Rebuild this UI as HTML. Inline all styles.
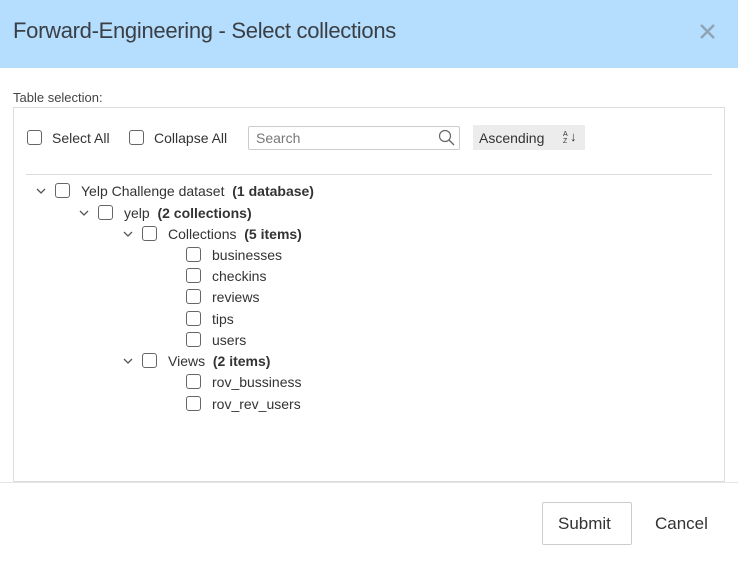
<!DOCTYPE html>
<html><head><style>
*{box-sizing:border-box;margin:0;padding:0}
body{width:738px;height:561px;background:#fff;font-family:"Liberation Sans",sans-serif;color:#333;position:relative;overflow:hidden}
.hdr{position:absolute;left:0;top:0;width:738px;height:68px;background:#b5ddfd}
.title{position:absolute;left:13px;top:18px;font-size:22px;color:#3a3f45;letter-spacing:-0.3px}
.x{position:absolute;left:698px;top:22px}
.a{position:absolute;white-space:nowrap;font-size:14px;color:#333}
.cb{position:absolute;width:15px;height:15px;border:1px solid #666;border-radius:3px;background:#fff}
.box{position:absolute;left:13px;top:107px;width:712px;height:375px;border:1px solid #ddd}
b{font-weight:bold}
</style></head><body>
<div class="hdr"></div>
<div class="title">Forward-Engineering - Select collections</div>
<svg class="x" width="20" height="20" viewBox="0 0 20 20"><path d="M3 3L16 16M16 3L3 16" stroke="#8fa3b5" stroke-width="2.5"/></svg>
<div class="a" style="left:13px;top:90px;font-size:13px;color:#444">Table selection:</div>
<div class="box"></div>
<div class="cb" style="left:27px;top:130px"></div><div class="a" style="left:52px;top:130px">Select All</div>
<div class="cb" style="left:129px;top:130px"></div><div class="a" style="left:154px;top:130px">Collapse All</div>
<div style="position:absolute;left:248px;top:126px;width:212px;height:24px;border:1px solid #ccc;border-radius:2px"></div>
<div class="a" style="left:256px;top:130px;color:#777">Search</div>
<svg style="position:absolute;left:438px;top:129px" width="18" height="18" viewBox="0 0 18 18"><circle cx="7" cy="7" r="5.5" fill="none" stroke="#666" stroke-width="1.2"/><path d="M11 11L16 16" stroke="#666" stroke-width="1.3"/></svg>
<div style="position:absolute;left:473px;top:125px;width:112px;height:25px;background:#ececec"></div>
<div class="a" style="left:479px;top:130px">Ascending</div>
<div class="a" style="left:563px;top:131px;font-size:7px;line-height:7px">A<br>Z</div><div class="a" style="left:570px;top:129px;font-size:13px">↓</div>
<div style="position:absolute;left:26px;top:174px;width:686px;height:1px;background:#ddd"></div>
<svg width="738" height="561" style="position:absolute;left:0;top:0">
<g fill="none" stroke="#555" stroke-width="1.3">
<path d="M37 189l4 4 4-4"/><path d="M80 211l4 4 4-4"/><path d="M124 232l4 4 4-4"/><path d="M124 359l4 4 4-4"/>
</g></svg>
<div class="cb" style="left:55px;top:183px"></div><div class="a" style="left:81px;top:183px">Yelp Challenge dataset &nbsp;<b>(1 database)</b></div>
<div class="cb" style="left:98px;top:205px"></div><div class="a" style="left:124px;top:205px">yelp &nbsp;<b>(2 collections)</b></div>
<div class="cb" style="left:142px;top:226px"></div><div class="a" style="left:168px;top:226px">Collections &nbsp;<b>(5 items)</b></div>
<div class="cb" style="left:186px;top:247px"></div><div class="a" style="left:212px;top:247px">businesses</div>
<div class="cb" style="left:186px;top:268px"></div><div class="a" style="left:212px;top:268px">checkins</div>
<div class="cb" style="left:186px;top:289px"></div><div class="a" style="left:212px;top:289px">reviews</div>
<div class="cb" style="left:186px;top:311px"></div><div class="a" style="left:212px;top:311px">tips</div>
<div class="cb" style="left:186px;top:332px"></div><div class="a" style="left:212px;top:332px">users</div>
<div class="cb" style="left:142px;top:353px"></div><div class="a" style="left:168px;top:353px">Views &nbsp;<b>(2 items)</b></div>
<div class="cb" style="left:186px;top:374px"></div><div class="a" style="left:212px;top:374px">rov_bussiness</div>
<div class="cb" style="left:186px;top:396px"></div><div class="a" style="left:212px;top:396px">rov_rev_users</div>
<div style="position:absolute;left:0;top:482px;width:738px;height:1px;background:#e5e5e5"></div>
<div style="position:absolute;left:542px;top:502px;width:90px;height:43px;border:1px solid #ccc;border-radius:2px"></div>
<div class="a" style="left:558px;top:514px;font-size:17px">Submit</div>
<div class="a" style="left:655px;top:514px;font-size:17px">Cancel</div>
</body></html>
